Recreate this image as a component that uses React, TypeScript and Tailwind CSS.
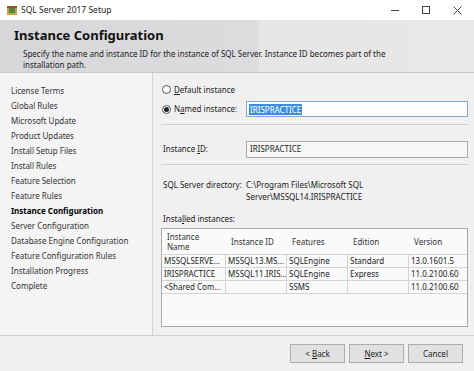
import React from 'react';

const steps = [
  'License Terms',
  'Global Rules',
  'Microsoft Update',
  'Product Updates',
  'Install Setup Files',
  'Install Rules',
  'Feature Selection',
  'Feature Rules',
  'Instance Configuration',
  'Server Configuration',
  'Database Engine Configuration',
  'Feature Configuration Rules',
  'Installation Progress',
  'Complete',
];

const rows = [
  ['MSSQLSERVE...', 'MSSQL13.MS...', 'SQLEngine', 'Standard', '13.0.1601.5'],
  ['IRISPRACTICE', 'MSSQL11.IRIS...', 'SQLEngine', 'Express', '11.0.2100.60'],
  ['<Shared Com...', '', 'SSMS', '', '11.0.2100.60'],
];

const cols = ['w-[64px]', 'w-[61px]', 'w-[61px]', 'w-[61px]', 'flex-1'];

const App: React.FC = () => {
  return (
    <div
      className="w-[474px] h-[371px] flex flex-col bg-[#f0f0f0] text-[#1a1a1a] text-[8px] overflow-hidden"
      style={{ fontFamily: '"Noto Sans", sans-serif' }}
    >
      {/* Title bar */}
      <div className="h-[20px] bg-white flex items-center">
        <svg width="11" height="11" viewBox="0 0 11 11" className="ml-[7px]">
          <rect x="0" y="1" width="10" height="9" fill="#c9a24a" />
          <rect x="2" y="3" width="6" height="5" fill="#3f8f3a" />
          <rect x="0" y="1" width="10" height="2" fill="#8a5a2a" />
          <rect x="3" y="4" width="4" height="1" fill="#e04040" />
        </svg>
        <span className="ml-[3px] text-[8.5px] text-[#222]">SQL Server 2017 Setup</span>
        <div className="ml-auto flex items-center h-full">
          <div className="w-[31px] flex justify-center">
            <div className="w-[8px] h-px bg-[#444]" />
          </div>
          <div className="w-[31px] flex justify-center">
            <div className="w-[8px] h-[8px] border border-[#444]" />
          </div>
          <div className="w-[33px] flex justify-center text-[#444]">
            <svg width="9" height="9" viewBox="0 0 9 9">
              <path d="M0.5 0.5 L8.5 8.5 M8.5 0.5 L0.5 8.5" stroke="#444" strokeWidth="1" />
            </svg>
          </div>
        </div>
      </div>

      {/* Header */}
      <div className="h-[53px] bg-[linear-gradient(to_right,#d7d7d9_0%,#dcdcde_54%,#e6e6e6_55%,#e8e8e8_100%)] border-b border-[#c8c8c8] pl-[14px] pt-[7px]">
        <div className="text-[13px] font-bold text-[#111] leading-[16px]">Instance Configuration</div>
        <div className="pl-[9px] mt-[5px] leading-[11px] text-[#222] w-[375px]">
          Specify the name and instance ID for the instance of SQL Server. Instance ID becomes part of the
          installation path.
        </div>
      </div>

      {/* Body */}
      <div className="flex-1 flex min-h-0">
        <div className="w-[153px] bg-[#f4f4f4] border-r border-[#d2d2d2] pl-[11px] pt-[10px]">
          {steps.map((s) => (
            <div
              key={s}
              className={`h-[15px] leading-[15px] ${s === 'Instance Configuration' ? 'font-bold text-black' : 'text-[#333]'}`}
            >
              {s}
            </div>
          ))}
        </div>

        <div className="flex-1 pl-[8px] pr-[6px] pt-[9px] flex flex-col">
          {/* Radios */}
          <div className="flex items-center h-[15px] pl-[1px]">
            <span className="w-[9px] h-[9px] rounded-full border border-[#555] bg-white" />
            <span className="ml-[3px]">
              <span className="underline">D</span>efault instance
            </span>
          </div>
          <div className="flex items-center h-[18px] mt-[3px] pl-[1px]">
            <span className="w-[9px] h-[9px] rounded-full border border-[#555] bg-white flex items-center justify-center">
              <span className="w-[5px] h-[5px] rounded-full bg-[#222]" />
            </span>
            <span className="ml-[3px] w-[72px]">
              N<span className="underline">a</span>med instance:
            </span>
            <div className="flex-1 h-[16px] border border-[#7ea8cc] bg-white flex items-center pl-[2px]">
              <span className="bg-[#3d8ee0] text-white px-px leading-[11px]">IRISPRACTICE</span>
            </div>
          </div>
          <div className="h-px bg-[#cfcfcf] mt-[6px]" />

          <div className="flex items-center h-[18px] mt-[15px]">
            <span className="w-[85px] pl-[2px]">
              Instance <span className="underline">I</span>D:
            </span>
            <div className="flex-1 h-[17px] border border-[#aaaaaa] bg-[#f7f7f7] flex items-center pl-[3px]">
              IRISPRACTICE
            </div>
          </div>
          <div className="h-px bg-[#cfcfcf] mt-[6px]" />

          <div className="flex mt-[14px] leading-[12px]">
            <span className="w-[85px] pl-[2px]">SQL Server directory:</span>
            <span>
              C:\Program Files\Microsoft SQL
              <br />
              Server\MSSQL14.IRISPRACTICE
            </span>
          </div>

          <div className="mt-[10px] pl-[2px] leading-[12px]">
            Insta<span className="underline">l</span>led instances:
          </div>

          {/* Table */}
          <div className="mt-[3px] h-[99px] border border-[#a9a9a9] bg-[#fafafa]">
            <div className="flex h-[26px] items-center text-[#333] border-b border-[#d4d4d4]">
              {['Instance Name', 'Instance ID', 'Features', 'Edition', 'Version'].map((h, i) => (
                <div key={h} className={`${cols[i]} pl-[5px] leading-[10px] ${i === 0 ? 'pr-[24px]' : ''}`}>
                  {h}
                </div>
              ))}
            </div>
            {rows.map((r, ri) => (
              <div key={ri} className="flex h-[13px] border-b border-[#d4d4d4]">
                {r.map((c, i) => (
                  <div
                    key={i}
                    className={`${cols[i]} leading-[12px] pl-[2px] whitespace-nowrap overflow-hidden ${i < 4 ? 'border-r border-[#d4d4d4]' : ''}`}
                  >
                    {c}
                  </div>
                ))}
              </div>
            ))}
          </div>
        </div>
      </div>

      {/* Footer */}
      <div className="h-[36px] border-t border-[#d0d0d0] flex items-start justify-end pt-[8px] pr-[11px] gap-[4px]">
        <button className="w-[55px] h-[19px] bg-[#e1e1e1] border border-[#adadad] text-[8px] text-[#222]">
          &lt; <span className="underline">B</span>ack
        </button>
        <button className="w-[55px] h-[19px] bg-[#e1e1e1] border border-[#adadad] text-[8px] text-[#222]">
          <span className="underline">N</span>ext &gt;
        </button>
        <button className="w-[55px] h-[19px] bg-[#e1e1e1] border border-[#adadad] text-[8px] text-[#222]">
          Cancel
        </button>
      </div>
    </div>
  );
};

export default App;
